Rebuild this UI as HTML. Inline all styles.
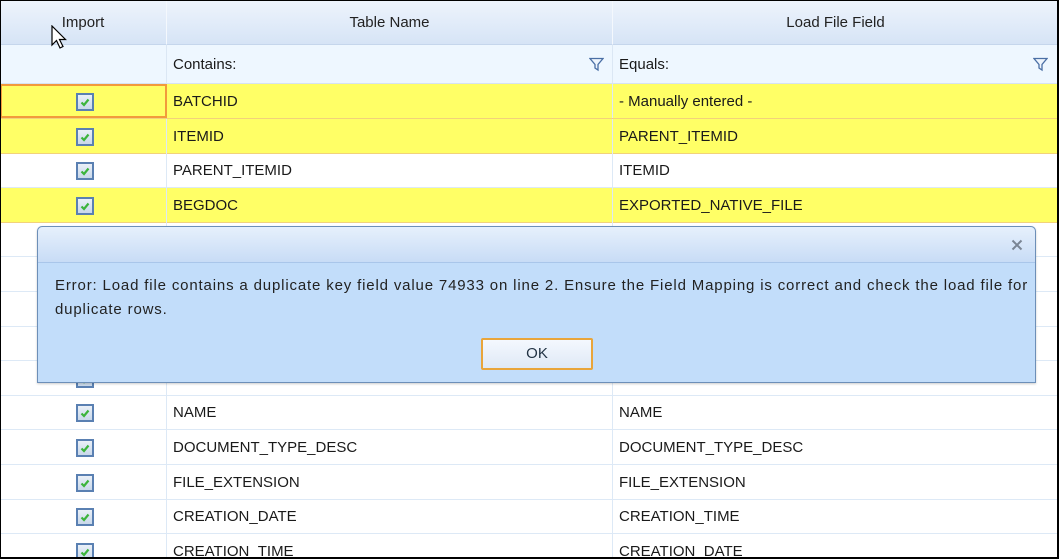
<!DOCTYPE html>
<html><head><meta charset="utf-8"><style>
*{margin:0;padding:0;box-sizing:border-box}
html,body{width:1059px;height:559px;overflow:hidden}
body{background:#fff;font-family:"Liberation Sans",sans-serif;font-size:15px;color:#1a1a1a;position:relative}
.frame{position:absolute;left:0;top:0;width:1059px;height:559px;border:1px solid #000;border-right:2px solid #000;border-bottom:2px solid #000;z-index:20;pointer-events:none}
.hdr{position:absolute;top:0;height:45px;background:linear-gradient(#eef4fc,#d6e4f6);border-right:1px solid #f4f8fd;border-bottom:1px solid #c5d6ec;text-align:center;line-height:46px;color:#222}
.flt{position:absolute;top:45px;height:39px;background:#eef7ff;border-right:1px solid #dbe7f4;border-bottom:1px solid #d6e3f1;line-height:40px;padding-left:6px}
.row{position:absolute;left:0;width:1059px;height:35px;border-bottom:1px solid #dde9f6}
.row.y{background:#ffff66;border-bottom:1px solid #f2d27a}
.c{position:absolute;top:0;height:100%;line-height:35px;border-right:1px solid #dde9f6}
.c1{left:0;width:167px}
.c2{left:167px;width:446px;padding-left:6px}
.c3{left:613px;width:446px;padding-left:6px}
.cb{position:absolute;left:76px;top:9px;width:18px;height:18px;border:2px solid #5a80b2;background:linear-gradient(#eaf0f8,#c9d8ea)}
.cb svg{position:absolute;left:2px;top:2px}
.dlg{position:absolute;left:37px;top:226px;width:999px;height:157px;border:1px solid #6d8fb8;border-radius:5px 5px 0 0;background:#c2ddfa;z-index:10;box-shadow:0 1px 2px rgba(0,0,0,.2)}
.tb{height:36px;background:linear-gradient(#e6f0fc,#c8dcf6);border-bottom:1px solid #a9c6ea;border-radius:5px 5px 0 0}
.msg{position:absolute;left:17px;top:47px;font-size:15px;line-height:24px;letter-spacing:0.84px;white-space:nowrap;color:#222}
.ok{position:absolute;left:443px;top:111px;width:112px;height:32px;border:2px solid #e9a53a;border-radius:2px;background:linear-gradient(#f4f8fe,#dfe9f6);text-align:center;line-height:28px;color:#234;font-size:15px}
</style></head><body>
<div class="hdr" style="left:0;width:167px">Import</div>
<div class="hdr" style="left:167px;width:446px">Table Name</div>
<div class="hdr" style="left:613px;width:446px">Load File Field</div>
<div class="flt" style="left:0;width:167px"></div>
<div class="flt" style="left:167px;width:446px">Contains:<svg style="position:absolute;right:8px;top:12px" width="15" height="15" viewBox="0 0 15 15"><path d="M1 1.5H14L9 7.5V13L6 11V7.5Z" fill="#eef5fd" stroke="#4a6fa5" stroke-width="1.3"/></svg></div>
<div class="flt" style="left:613px;width:446px">Equals:<svg style="position:absolute;right:10px;top:12px" width="15" height="15" viewBox="0 0 15 15"><path d="M1 1.5H14L9 7.5V13L6 11V7.5Z" fill="#eef5fd" stroke="#4a6fa5" stroke-width="1.3"/></svg></div>

<div id="rows"></div>
<script>
var d=[["BATCHID","- Manually entered -",1],["ITEMID","PARENT_ITEMID",1],["PARENT_ITEMID","ITEMID",0],["BEGDOC","EXPORTED_NATIVE_FILE",1],["","",0],["","",0],["","",0],["","",0],["","",0],["NAME","NAME",0],["DOCUMENT_TYPE_DESC","DOCUMENT_TYPE_DESC",0],["FILE_EXTENSION","FILE_EXTENSION",0],["CREATION_DATE","CREATION_TIME",0],["CREATION_TIME","CREATION_DATE",0]];
var h="";
for(var i=0;i<d.length;i++){var t=84+i*34.6;
h+='<div class="row'+(d[i][2]?' y':'')+'" style="top:'+t+'px"><div class="c c1"'+(i==0?' style="border:2px solid #f29a3c"':'')+'><div class="cb"'+(i==0?' style="left:74px;top:7px"':'')+'><svg width="10" height="10" viewBox="0 0 10 10"><path d="M1.5 5.5L4 8L8.5 2.5" fill="none" stroke="#3cb43c" stroke-width="2.2"/></svg></div></div><div class="c c2">'+d[i][0]+'</div><div class="c c3">'+d[i][1]+'</div></div>';}
document.getElementById("rows").innerHTML=h;
</script>
<div class="dlg">
<div class="tb"><svg style="position:absolute;right:12px;top:12px" width="12" height="12" viewBox="0 0 12 12"><path d="M1.5 1.5L10.5 10.5M10.5 1.5L1.5 10.5" stroke="#7a8594" stroke-width="2"/></svg></div>
<div class="msg">Error: Load file contains a duplicate key field value 74933 on line 2. Ensure the Field Mapping is correct and check the load file for<br>duplicate rows.</div>
<div class="ok">OK</div>
</div>
<svg style="position:absolute;left:51px;top:25px;z-index:15" width="18" height="28" viewBox="0 0 18 28"><path d="M1 1V20L5.5 15.5L9 23L12 21.5L8.5 14.5H14.5Z" fill="#fff" stroke="#000" stroke-width="1.2"/></svg>
<div class="frame"></div>
</body></html>
